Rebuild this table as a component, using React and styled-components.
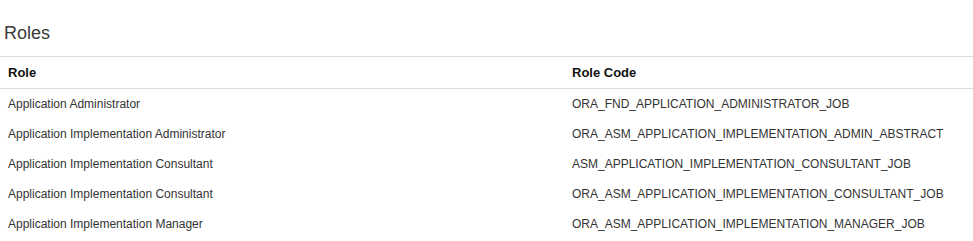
import React from 'react'
import styled, { createGlobalStyle } from 'styled-components'

const GlobalStyle = createGlobalStyle`
  html, body {
    margin: 0;
    padding: 0;
    background: #fff;
  }
  body {
    font-family: "Liberation Sans", Arial, sans-serif;
  }
`

const roles = [
  { id: 1, name: 'Application Administrator', code: 'ORA_FND_APPLICATION_ADMINISTRATOR_JOB' },
  { id: 2, name: 'Application Implementation Administrator', code: 'ORA_ASM_APPLICATION_IMPLEMENTATION_ADMIN_ABSTRACT' },
  { id: 3, name: 'Application Implementation Consultant', code: 'ASM_APPLICATION_IMPLEMENTATION_CONSULTANT_JOB' },
  { id: 4, name: 'Application Implementation Consultant', code: 'ORA_ASM_APPLICATION_IMPLEMENTATION_CONSULTANT_JOB' },
  { id: 5, name: 'Application Implementation Manager', code: 'ORA_ASM_APPLICATION_IMPLEMENTATION_MANAGER_JOB' },
]

const App = () => {
  return (
    <>
      <GlobalStyle />
      <Wrapper>
        <Title>Roles</Title>
        <Table>
          <HeadRow>
            <HeadCell>Role</HeadCell>
            <HeadCell>Role Code</HeadCell>
          </HeadRow>
          {roles.map((role) => {
            return (
              <Row key={role.id}>
                <Cell>{role.name}</Cell>
                <Cell>{role.code}</Cell>
              </Row>
            )
          })}
        </Table>
      </Wrapper>
    </>
  )
}

export default App

const Wrapper = styled.section`
  width: 973px;
  color: #333;
`

const Title = styled.h2`
  margin: 21px 0 11px 4px;
  font-size: 18px;
  line-height: 24px;
  font-weight: normal;
  color: #3a3a3a;
`

const Table = styled.div`
  display: flex;
  flex-direction: column;
  border-top: 1px solid #dcdcdc;
`

const HeadRow = styled.div`
  display: grid;
  grid-template-columns: 564px 1fr;
  height: 31px;
  border-bottom: 1px solid #dcdcdc;
`

const HeadCell = styled.div`
  padding: 0 8px;
  font-size: 13px;
  font-weight: bold;
  line-height: 31px;
  color: #111;
`

const Row = styled.div`
  display: grid;
  grid-template-columns: 564px 1fr;
  height: 30px;
`

const Cell = styled.div`
  padding: 0 8px;
  font-size: 12px;
  line-height: 30px;
  color: #333;
  white-space: nowrap;
`
